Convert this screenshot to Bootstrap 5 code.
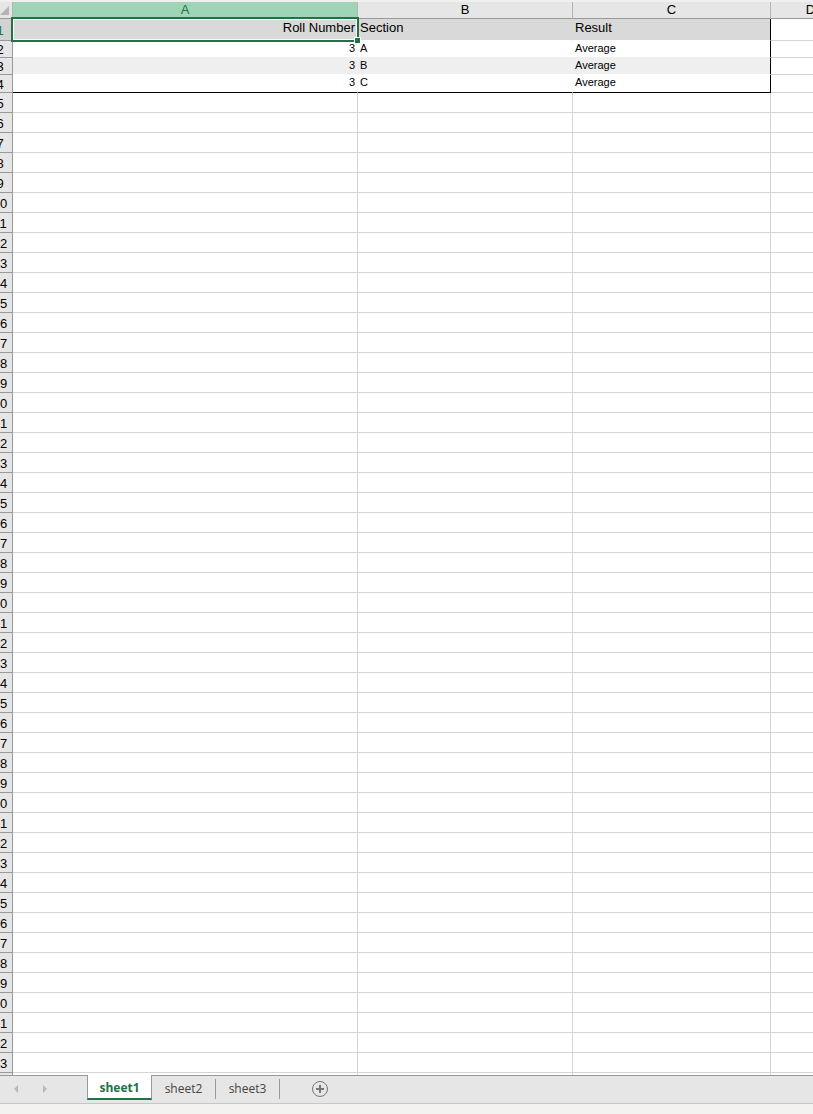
<!DOCTYPE html>
<html lang="en">
<head>
    <meta charset="UTF-8">
    <meta name="viewport" content="width=device-width, initial-scale=1.0">
    <title>Results - sheet1</title>
    <link href="https://cdn.jsdelivr.net/npm/bootstrap@5.3.0/dist/css/bootstrap.min.css" rel="stylesheet">
    <style>
        body {
            background-color: #f3f2f1;
            font-family: "Liberation Sans", Arial, sans-serif;
            color: #000;
        }

        .grid-area {
            min-height: 0;
            background-color: #fff;
            border-top: 2px solid #f0f0f0;
        }

        /* the row numbers are scrolled half out of view */
        .sheet-grid {
            table-layout: fixed;
            border-collapse: separate;
            border-spacing: 0;
            width: calc(100% + 50px);
            margin-left: -12px;
            font-size: 11px;
            line-height: 14px;
        }

        .col-num { width: 25px; }
        .col-a { width: 345px; }
        .col-b { width: 215px; }
        .col-c { width: 198px; }

        .sheet-grid th,
        .sheet-grid td {
            height: 20px;
            padding: 0 2px;
            border-right: 1px solid #d4d4d4;
            border-bottom: 1px solid #d4d4d4;
            white-space: nowrap;
            vertical-align: middle;
        }

        .sheet-grid th {
            padding: 0;
            background-color: #e6e6e6;
            border-color: #999;
            font-size: 13px;
            font-weight: 400;
            text-align: center;
        }

        .sheet-grid tbody th {
            padding-top: 2px;
        }

        .sheet-grid thead th {
            height: 17px;
            border-right-color: #b5b5b5;
        }

        .sheet-grid thead th.active-col {
            background-color: #9fd5b7;
            color: #217346;
        }

        .sheet-grid tbody th.active-row {
            background-color: #d2d2d2;
            color: #217346;
        }

        .sheet-grid .title-row > * { height: 22px; }
        .sheet-grid .data-row > * { height: 17px; }
        .sheet-grid .last-row > * { height: 18px; }

        .title-row td.filled {
            background-color: #d9d9d9;
            border-color: #d9d9d9;
            border-bottom-color: #fff;
            font-size: 13px;
            padding-bottom: 4px;
        }

        .data-row td.filled {
            border-color: #fff;
            padding-bottom: 2px;
        }

        .data-row.before-band td.filled { border-bottom-color: #efefef; }

        .data-row.band td.filled {
            background-color: #efefef;
            border-right-color: #efefef;
        }

        .last-row td.filled {
            border-right-color: #fff;
            border-bottom-color: #000;
            padding-bottom: 3px;
        }

        .sheet-grid td.filled.edge { border-right-color: #000; }

        .selection {
            position: absolute;
            inset: -2px;
            z-index: 2;
            border: 2px solid #217346;
            box-shadow: inset 0 0 0 1px #fff;
            pointer-events: none;
        }

        .fill-handle {
            position: absolute;
            right: -4px;
            bottom: -4px;
            width: 7px;
            height: 7px;
            background-color: #217346;
            border: 1px solid #fff;
        }

        .tab-bar {
            height: 29px;
            background-color: #e6e6e6;
            border-top: 1px solid #999;
            border-bottom: 1px solid #c6c6c6;
            font-family: "Open Sans", "Segoe UI", sans-serif;
            font-size: 12px;
            line-height: 16px;
        }

        .scroll-btns {
            width: 87px;
            height: 26px;
            padding-left: 12px;
            gap: 20px;
        }

        .plain-btn {
            padding: 0;
            border: 0;
            background: none;
            line-height: 0;
        }

        .sheet-tab {
            min-width: 64px;
            height: 20px;
            margin-top: 3px;
            padding: 0 8px;
            border: 0;
            border-right: 1px solid #999;
            background: none;
            color: #444;
        }

        .sheet-tab.active {
            min-width: 65px;
            height: 25px;
            margin-top: -1px;
            padding-top: 3px;
            border: 1px solid #999;
            border-top: 0;
            border-bottom: 2px solid #217346;
            background-color: #fff;
            color: #217346;
            font-weight: 700;
        }

        .add-btn {
            height: 26px;
            margin-left: 31px;
        }

        .status-strip { height: 10px; }
    </style>
</head>
<body class="d-flex flex-column vh-100 overflow-hidden">
    <main class="grid-area flex-grow-1 overflow-hidden">
        <table class="sheet-grid">
            <colgroup>
                <col class="col-num">
                <col class="col-a">
                <col class="col-b">
                <col class="col-c">
                <col>
            </colgroup>
            <thead>
                <tr>
                    <th class="text-end lh-1">
                        <svg width="14" height="12" viewBox="0 0 14 12" aria-hidden="true"><path d="M11 1v9H2z" fill="#b4b4b4"/></svg>
                    </th>
                    <th scope="col" class="active-col">A</th>
                    <th scope="col">B</th>
                    <th scope="col">C</th>
                    <th scope="col">D</th>
                </tr>
            </thead>
            <tbody id="gridRows">
                <tr class="title-row">
                    <th scope="row" class="active-row">1</th>
                    <td class="filled text-end position-relative">Roll Number<div class="selection"><div class="fill-handle"></div></div></td>
                    <td class="filled">Section</td>
                    <td class="filled edge">Result</td>
                    <td></td>
                </tr>
                <tr class="data-row before-band">
                    <th scope="row">2</th>
                    <td class="filled text-end">3</td>
                    <td class="filled">A</td>
                    <td class="filled edge">Average</td>
                    <td></td>
                </tr>
                <tr class="data-row band">
                    <th scope="row">3</th>
                    <td class="filled text-end">3</td>
                    <td class="filled">B</td>
                    <td class="filled edge">Average</td>
                    <td></td>
                </tr>
                <tr class="last-row">
                    <th scope="row">4</th>
                    <td class="filled text-end">3</td>
                    <td class="filled">C</td>
                    <td class="filled edge">Average</td>
                    <td></td>
                </tr>
            </tbody>
        </table>
    </main>

    <nav class="tab-bar d-flex flex-shrink-0 align-items-start" aria-label="Sheets">
        <div class="scroll-btns d-flex align-items-center">
            <button type="button" class="plain-btn" aria-label="Previous sheet">
                <svg width="8" height="8" viewBox="0 0 8 8"><path d="M6 0v8L2 4z" fill="#b8b8b8"/></svg>
            </button>
            <button type="button" class="plain-btn" aria-label="Next sheet">
                <svg width="8" height="8" viewBox="0 0 8 8"><path d="M3 0v8l4-4z" fill="#b8b8b8"/></svg>
            </button>
        </div>
        <button type="button" class="sheet-tab active">sheet1</button>
        <button type="button" class="sheet-tab">sheet2</button>
        <button type="button" class="sheet-tab">sheet3</button>
        <button type="button" class="plain-btn add-btn" aria-label="New sheet">
            <svg width="18" height="18" viewBox="0 0 18 18" fill="none" stroke="#777">
                <circle cx="9" cy="9" r="7.5"/>
                <path d="M9 5v8M5 9h8" stroke-width="2"/>
            </svg>
        </button>
    </nav>
    <div class="status-strip flex-shrink-0"></div>

    <script src="https://cdn.jsdelivr.net/npm/bootstrap@5.3.0/dist/js/bootstrap.bundle.min.js"></script>
    <script>
        // Empty rows below the data
        const gridRows = document.getElementById('gridRows');
        for (let i = 5; i <= 54; i++) {
            const row = document.createElement('tr');
            row.innerHTML = `<th scope="row">${i}</th><td></td><td></td><td></td><td></td>`;
            gridRows.appendChild(row);
        }

        // Sheet switching
        const tabs = document.querySelectorAll('.sheet-tab');
        tabs.forEach((tab) => {
            tab.addEventListener('click', () => {
                tabs.forEach((t) => t.classList.toggle('active', t === tab));
            });
        });
    </script>
</body>
</html>
